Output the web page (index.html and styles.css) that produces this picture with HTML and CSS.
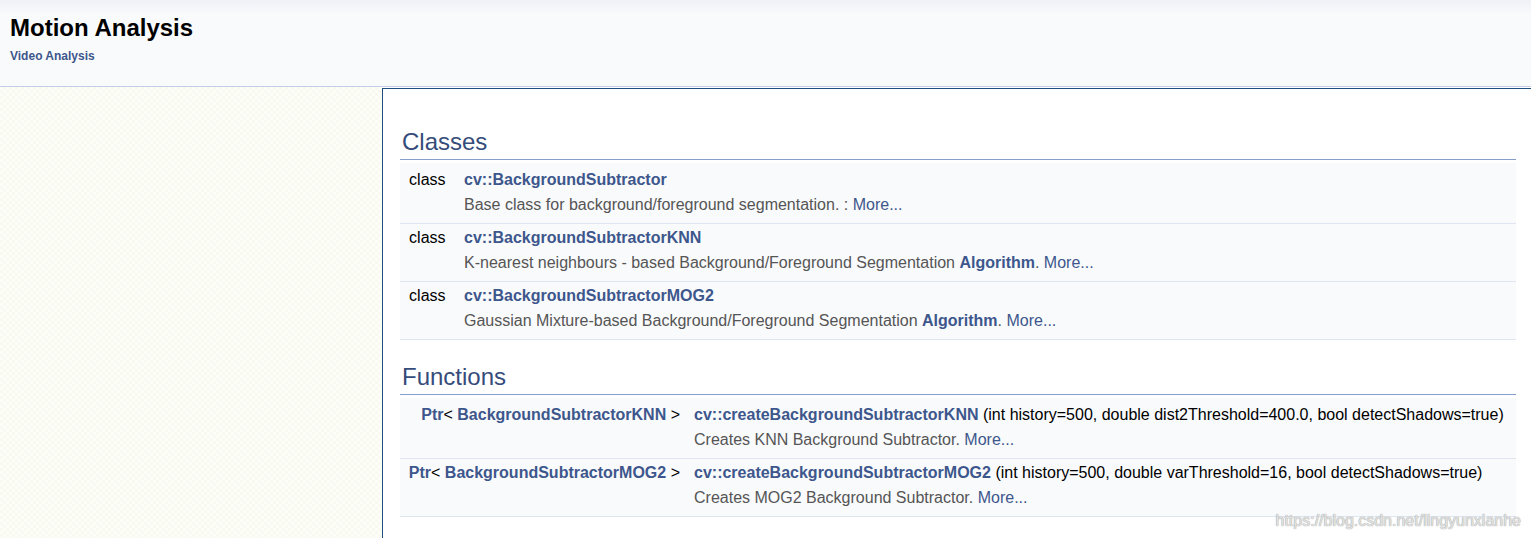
FILE: index.html
```html
<!DOCTYPE html>
<html lang="en">
<head>
<meta charset="utf-8">
<title>Motion Analysis</title>
<link rel="stylesheet" href="styles.css">
</head>
<body>
<div class="header">
  <div class="title">Motion Analysis</div>
  <div class="ingroups"><a href="#">Video Analysis</a></div>
</div>
<div class="main">
  <div class="sidebar"></div>
  <div class="contents">
    <h2 class="groupheader first">Classes</h2>
    <table class="memberdecls">
      <tr>
        <td class="itemleft cls top">class&nbsp;</td>
        <td class="itemright top"><a class="el" href="#">cv::BackgroundSubtractor</a></td>
      </tr>
      <tr>
        <td class="mdescleft cls"></td>
        <td class="mdescright">Base class for background/foreground segmentation. : <a href="#">More...</a></td>
      </tr>
      <tr class="sep"><td colspan="2"></td></tr>
      <tr>
        <td class="itemleft cls">class&nbsp;</td>
        <td class="itemright"><a class="el" href="#">cv::BackgroundSubtractorKNN</a></td>
      </tr>
      <tr>
        <td class="mdescleft cls"></td>
        <td class="mdescright">K-nearest neighbours - based Background/Foreground Segmentation <a class="el" href="#">Algorithm</a>. <a href="#">More...</a></td>
      </tr>
      <tr class="sep"><td colspan="2"></td></tr>
      <tr>
        <td class="itemleft cls">class&nbsp;</td>
        <td class="itemright"><a class="el" href="#">cv::BackgroundSubtractorMOG2</a></td>
      </tr>
      <tr>
        <td class="mdescleft cls"></td>
        <td class="mdescright">Gaussian Mixture-based Background/Foreground Segmentation <a class="el" href="#">Algorithm</a>. <a href="#">More...</a></td>
      </tr>
      <tr class="sep"><td colspan="2"></td></tr>
    </table>

    <h2 class="groupheader second">Functions</h2>
    <table class="memberdecls">
      <tr>
        <td class="itemleft fn top"><a class="el" href="#">Ptr</a>&lt; <a class="el" href="#">BackgroundSubtractorKNN</a> &gt;</td>
        <td class="itemright top"><a class="el" href="#">cv::createBackgroundSubtractorKNN</a> (int history=500, double dist2Threshold=400.0, bool detectShadows=true)</td>
      </tr>
      <tr>
        <td class="mdescleft fn"></td>
        <td class="mdescright">Creates KNN Background Subtractor. <a href="#">More...</a></td>
      </tr>
      <tr class="sep"><td colspan="2"></td></tr>
      <tr>
        <td class="itemleft fn"><a class="el" href="#">Ptr</a>&lt; <a class="el" href="#">BackgroundSubtractorMOG2</a> &gt;</td>
        <td class="itemright"><a class="el" href="#">cv::createBackgroundSubtractorMOG2</a> (int history=500, double varThreshold=16, bool detectShadows=true)</td>
      </tr>
      <tr>
        <td class="mdescleft fn"></td>
        <td class="mdescright">Creates MOG2 Background Subtractor. <a href="#">More...</a></td>
      </tr>
      <tr class="sep"><td colspan="2"></td></tr>
    </table>
  </div>
</div>
<div class="watermark">https://blog.csdn.net/lingyunxianhe</div>
</body>
</html>
```

FILE: styles.css
```css
html, body {
  margin: 0;
  padding: 0;
}
body {
  font-family: "Liberation Sans", Arial, sans-serif;
  font-size: 16px;
  color: #000;
  background: #fff;
  height: 538px;
  overflow: hidden;
  position: relative;
}
a {
  color: #3D578C;
  text-decoration: none;
}
.header {
  box-sizing: border-box;
  height: 87px;
  border-bottom: 1px solid #C4CFE5;
  background: linear-gradient(#eff1f6 0px, #f9fafc 14px, #f9fafc 100%);
  padding: 14px 0 0 10px;
}
.title {
  font-size: 24px;
  font-weight: bold;
  line-height: 28px;
}
.ingroups {
  font-size: 12px;
  font-weight: bold;
  line-height: 14px;
  margin-top: 7px;
}
.ingroups a {
  color: #3D578C;
}
.main {
  display: flex;
  height: calc(538px - 87px);
}
.sidebar {
  width: 382px;
  flex: none;
  background-color: #fbfcf6;
  background-image: repeating-conic-gradient(#f8faef 0% 25%, #fdfefa 0% 50%);
  background-size: 6px 6px;
}
.contents {
  flex: 1;
  margin-top: 1px;
  border-top: 1px solid #1f4f80;
  border-left: 1px solid #1f4f80;
  padding: 0 15px 0 17px;
}
.groupheader {
  font-size: 24px;
  font-weight: normal;
  line-height: 28px;
  color: #354C7B;
  margin: 0;
  padding: 0 0 3px 2px;
  border-bottom: 1px solid #879ECB;
}
.groupheader.first {
  margin-top: 39px;
}
.groupheader.second {
  margin-top: 23px;
}
.memberdecls {
  width: 100%;
  border-collapse: collapse;
  border-spacing: 0;
  margin-top: 3px;
}
.memberdecls td {
  background: #F9FAFC;
  padding: 0;
  vertical-align: top;
}
.itemleft {
  text-align: right;
  white-space: nowrap;
  line-height: 20px;
  padding-top: 4px !important;
}
.itemleft.cls {
  width: 50px;
  padding-right: 14px !important;
}
.itemleft.fn {
  width: 280px;
  padding-right: 14px !important;
}
.itemright {
  line-height: 20px;
  padding-top: 4px !important;
  white-space: nowrap;
}
.itemleft.top, .itemright.top {
  padding-top: 7px !important;
}
.mdescright {
  color: #555;
  line-height: 20px;
  padding-top: 5px !important;
  padding-bottom: 8px !important;
}
.el {
  font-weight: bold;
}
.sep td {
  height: 1px;
  background: #DEE4F0 !important;
}
.watermark {
  position: absolute;
  right: 10px;
  bottom: 8px;
  font-size: 16px;
  color: rgba(235, 235, 235, 0.9);
  text-shadow: 0 0 1px #9a9a9a, 0 0 1px #b0b0b0;
}
```
